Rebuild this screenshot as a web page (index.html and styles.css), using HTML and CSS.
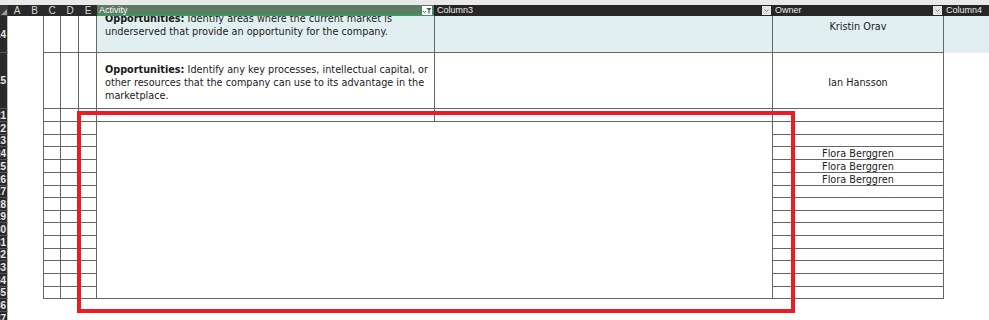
FILE: index.html
```html
<!DOCTYPE html>
<html>
<head>
<meta charset="utf-8">
<link rel="stylesheet" href="styles.css">
</head>
<body>
<div class="sheet">
  <div class="strip"></div>
  <div class="grid">
    <!-- header row -->
    <div class="corner"><span class="tri"></span></div>
    <div class="hl">A</div>
    <div class="hl">B</div>
    <div class="hl">C</div>
    <div class="hl">D</div>
    <div class="hl">E</div>
    <div class="hc hc-act"><span>Activity</span>
      <span class="fbtn"><svg width="10" height="9" viewBox="0 0 10 9"><path d="M1 5 L2.5 6.5 L4 5" fill="none" stroke="#2e6b45" stroke-width="1"/><path d="M4.5 2 H9.5 L7.6 4.5 V7.5 H6.4 V4.5 Z" fill="#2e6b45"/></svg></span></div>
    <div class="hc"><span>Column3</span><span class="dbtn"><svg width="9" height="9" viewBox="0 0 9 9"><path d="M2.5 3.5 L4.5 5.5 L6.5 3.5" fill="none" stroke="#8a8a8a" stroke-width="1"/></svg></span></div>
    <div class="hc"><span>Owner</span><span class="dbtn"><svg width="9" height="9" viewBox="0 0 9 9"><path d="M2.5 3.5 L4.5 5.5 L6.5 3.5" fill="none" stroke="#8a8a8a" stroke-width="1"/></svg></span></div>
    <div class="hc hc-last"><span>Column4</span></div>

    <!-- row 14 -->
    <div class="rh"><span>14</span></div>
    <div class="c cC"></div><div class="c cD"></div><div class="c cE"></div>
    <div class="c act blue"><div class="txt txt-up"><b>Opportunities:</b> Identify areas where the current market is<br>underserved that provide an opportunity for the company.</div></div>
    <div class="c c3 blue"></div>
    <div class="c own blue"><div class="name name-top">Kristin Orav</div></div>
    <div class="c4 blue"></div>

    <!-- row 15 -->
    <div class="rh"><span>15</span></div>
    <div class="c cC"></div><div class="c cD"></div><div class="c cE"></div>
    <div class="c act"><div class="txt txt-mid"><b>Opportunities:</b> Identify any key processes, intellectual capital, or<br>other resources that the company can use to its advantage in the<br>marketplace.</div></div>
    <div class="c c3"></div>
    <div class="c own"><div class="name name-mid">Ian Hansson</div></div>

    <!-- row 21 -->
    <div class="rh"><span>21</span></div>
    <div class="c cC"></div><div class="c cD"></div><div class="c cE"></div>
    <div class="c act"></div>
    <div class="c c3"></div>
    <div class="c own"></div>

    <!-- row 22 with merged block -->
    <div class="rh"><span>22</span></div>
    <div class="c cC"></div><div class="c cD"></div><div class="c cE"></div>
    <div class="c merge"></div>
    <div class="c own"></div>

    <div class="rh"><span>23</span></div>
    <div class="c cC"></div><div class="c cD"></div><div class="c cE"></div>
    <div class="c own"></div>

    <div class="rh"><span>24</span></div>
    <div class="c cC"></div><div class="c cD"></div><div class="c cE"></div>
    <div class="c own"><div class="name">Flora Berggren</div></div>

    <div class="rh"><span>25</span></div>
    <div class="c cC"></div><div class="c cD"></div><div class="c cE"></div>
    <div class="c own"><div class="name">Flora Berggren</div></div>

    <div class="rh"><span>26</span></div>
    <div class="c cC"></div><div class="c cD"></div><div class="c cE"></div>
    <div class="c own"><div class="name">Flora Berggren</div></div>

    <div class="rh"><span>27</span></div>
    <div class="c cC"></div><div class="c cD"></div><div class="c cE"></div>
    <div class="c own"></div>

    <div class="rh"><span>28</span></div>
    <div class="c cC"></div><div class="c cD"></div><div class="c cE"></div>
    <div class="c own"></div>

    <div class="rh"><span>29</span></div>
    <div class="c cC"></div><div class="c cD"></div><div class="c cE"></div>
    <div class="c own"></div>

    <div class="rh"><span>30</span></div>
    <div class="c cC"></div><div class="c cD"></div><div class="c cE"></div>
    <div class="c own"></div>

    <div class="rh"><span>31</span></div>
    <div class="c cC"></div><div class="c cD"></div><div class="c cE"></div>
    <div class="c own"></div>

    <div class="rh"><span>32</span></div>
    <div class="c cC"></div><div class="c cD"></div><div class="c cE"></div>
    <div class="c own"></div>

    <div class="rh"><span>33</span></div>
    <div class="c cC"></div><div class="c cD"></div><div class="c cE"></div>
    <div class="c own"></div>

    <div class="rh"><span>34</span></div>
    <div class="c cC"></div><div class="c cD"></div><div class="c cE"></div>
    <div class="c own"></div>

    <div class="rh"><span>35</span></div>
    <div class="c cC"></div><div class="c cD"></div><div class="c cE"></div>
    <div class="c own"></div>

    <div class="rh"><span>36</span></div>
    <div class="rh"><span>37</span></div>
  </div>
  <div class="annot"></div>
</div>
</body>
</html>
```

FILE: styles.css
```css
html, body {
  margin: 0;
  padding: 0;
  background: #ffffff;
}

.sheet {
  position: relative;
  width: 989px;
  height: 320px;
  overflow: hidden;
  background: #ffffff;
  font-family: "DejaVu Sans", "Liberation Sans", sans-serif;
  color: #1a1a1a;
}

.strip {
  height: 5px;
  background: #e9e9e9;
}

.grid {
  display: grid;
  grid-template-columns: 8px 18px 17px 18px 18px 18px 338px 338px 171px 45px;
  grid-template-rows: 11px 37px 56px 13px 13px 12px 13px 13px 13px 12px 13px 12px 13px 13px 12px 13px 13px 12px 13px 13px;
}

/* header row */
.corner {
  grid-column: 1;
  background: #3a3a3a;
  position: relative;
}
.tri {
  position: absolute;
  right: 1px;
  bottom: 1px;
  width: 0;
  height: 0;
  border-left: 6px solid transparent;
  border-bottom: 6px solid #9c9c9c;
}
.hl {
  background: #2a2a2a;
  color: #d9d9d9;
  font: 10px/11px "Liberation Sans", sans-serif;
  display: flex;
  align-items: center;
  justify-content: center;
}
.hc {
  background: #262626;
  color: #ececec;
  font: 9px/11px "Liberation Sans", sans-serif;
  display: flex;
  align-items: center;
  justify-content: space-between;
  padding-left: 2px;
  padding-right: 1px;
  overflow: hidden;
  white-space: nowrap;
}
.hc-act {
  background: #5b7b64;
  color: #ffffff;
  box-shadow: inset 0 -2px #3c9a5f;
  border-right: 1px solid #1c1c1c;
}
.hc-last {
  padding-right: 0;
}
.fbtn {
  width: 10px;
  height: 9px;
  background: #ffffff;
  display: flex;
  margin-right: 1px;
}
.dbtn {
  width: 9px;
  height: 9px;
  background: #e4e4e4;
  display: flex;
  margin-right: 1px;
}

/* row headers */
.rh {
  grid-column: 1;
  background: #2a2a2a;
  color: #e8e8e8;
  font: bold 10px/11px "Liberation Sans", sans-serif;
  display: flex;
  align-items: center;
  justify-content: flex-end;
  overflow: hidden;
  white-space: nowrap;
  padding-right: 1px;
  border-bottom: 1px solid #575757;
  border-right: 1px solid #bdbdbd;
}

/* cells */
.c {
  border-right: 1px solid #666666;
  border-bottom: 1px solid #666666;
  overflow: hidden;
}
.cC { grid-column: 4; border-left: 1px solid #666666; }
.cD { grid-column: 5; }
.cE { grid-column: 6; }
.act { grid-column: 7; }
.c3 { grid-column: 8; }
.own { grid-column: 9; }
.c4 { grid-column: 10; }
.merge {
  grid-column: 7 / 9;
  grid-row: span 14;
}
.blue {
  background: #e2eff1;
}

.txt {
  font-size: 9.7px;
  line-height: 13px;
  padding-left: 8px;
  white-space: nowrap;
}
.txt b {
  font-weight: bold;
}
.txt-up {
  margin-top: -4px;
}
.txt-mid {
  padding-top: 10px;
}

.name {
  font-size: 9.7px;
  line-height: 13px;
  text-align: center;
  white-space: nowrap;
}
.name-top {
  padding-top: 4px;
}
.name-mid {
  padding-top: 23px;
}

/* red annotation frame drawn over the sheet */
.annot {
  position: absolute;
  left: 77px;
  top: 111px;
  width: 718px;
  height: 202px;
  box-sizing: border-box;
  border: 4px solid #ec1c24;
}
```
